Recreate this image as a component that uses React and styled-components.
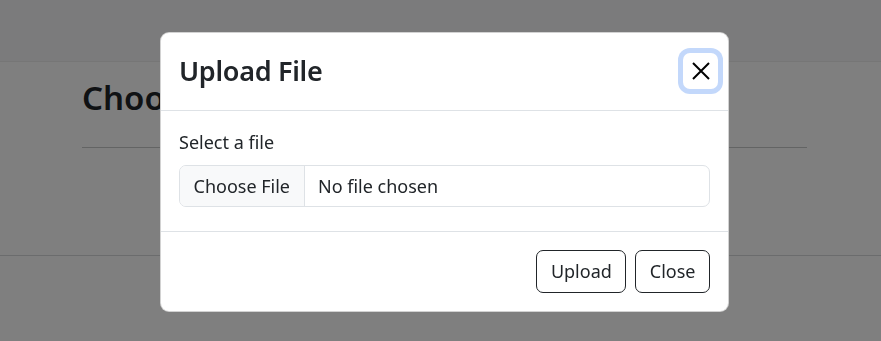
import styled, { createGlobalStyle } from 'styled-components';

const GlobalStyle = createGlobalStyle`
  * { box-sizing: border-box; }
  html, body { margin: 0; padding: 0; }
  body {
    font-family: 'Noto Sans', 'Open Sans', sans-serif;
    font-size: 18px;
    line-height: 1.5;
    color: #212529;
    background: #ffffff;
  }
`;

export default function App() {
  return (
    <>
      <GlobalStyle />
      <Page>
        <Navbar />
        <Section>
          <Heading>Choose a file to upload</Heading>
          <Rule />
        </Section>
      </Page>

      <Backdrop>
        <Dialog>
          <Header>
            <Title>Upload File</Title>
            <CloseButton aria-label="Close">
              <svg width="18" height="18" viewBox="0 0 18 18">
                <path d="M1 1 L17 17 M17 1 L1 17" stroke="#000" strokeWidth="2" fill="none" />
              </svg>
            </CloseButton>
          </Header>
          <Body>
            <Label>Select a file</Label>
            <FileField>
              <FileButton>Choose File</FileButton>
              <FileName>No file chosen</FileName>
            </FileField>
          </Body>
          <Footer>
            <OutlineButton>Upload</OutlineButton>
            <OutlineButton>Close</OutlineButton>
          </Footer>
        </Dialog>
      </Backdrop>
    </>
  );
}

const Page = styled.div`
  min-height: 341px;
`;

const Navbar = styled.nav`
  height: 62px;
  background: #f7f7f8;
  border-bottom: 1px solid #ececec;
`;

const Section = styled.section`
  height: 194px;
  padding: 16px 74px 0 82px;
  border-bottom: 1px solid #d6d8db;
`;

const Heading = styled.h2`
  margin: 0;
  font-size: 33px;
  font-weight: 600;
  line-height: 1.2;
  white-space: nowrap;
`;

const Rule = styled.hr`
  margin: 29px 0 0;
  border: 0;
  border-top: 1px solid #212529;
  opacity: 0.25;
`;

const Backdrop = styled.div`
  position: fixed;
  inset: 0;
  background: rgba(0, 0, 0, 0.5);
  display: flex;
  justify-content: center;
  align-items: flex-start;
  padding: 32px 0 0 8px;
`;

const Dialog = styled.div`
  width: 569px;
  background: #ffffff;
  border: 1px solid rgba(0, 0, 0, 0.175);
  border-radius: 9px;
  display: flex;
  flex-direction: column;
`;

const Header = styled.div`
  display: flex;
  align-items: center;
  justify-content: space-between;
  height: 78px;
  padding: 0 10px 0 18px;
  border-bottom: 1px solid #dee2e6;
`;

const Title = styled.h5`
  margin: 0;
  font-size: 27px;
  font-weight: 600;
  letter-spacing: -0.3px;
  line-height: 1.5;
`;

const CloseButton = styled.button`
  width: 35px;
  height: 36px;
  padding: 0;
  display: flex;
  align-items: center;
  justify-content: center;
  background: transparent;
  border: 0;
  border-radius: 7px;
  box-shadow: 0 0 0 5px #c3d8fb;
  margin-bottom: 2px;
`;

const Body = styled.div`
  padding: 18px 18px 24px;
`;

const Label = styled.label`
  display: block;
  margin-bottom: 9px;
  font-size: 18px;
  line-height: 27px;
`;

const FileField = styled.div`
  display: flex;
  align-items: stretch;
  height: 42px;
  border: 1px solid #dee2e6;
  border-radius: 7px;
  overflow: hidden;
`;

const FileButton = styled.span`
  display: flex;
  align-items: center;
  padding: 0 13.5px;
  background: #f8f9fa;
  border-right: 1px solid #dee2e6;
  white-space: nowrap;
`;

const FileName = styled.span`
  display: flex;
  align-items: center;
  padding: 0 13.5px;
  white-space: nowrap;
`;

const Footer = styled.div`
  display: flex;
  justify-content: flex-end;
  gap: 9px;
  padding: 18px 18px 18px;
  border-top: 1px solid #dee2e6;
`;

const OutlineButton = styled.button`
  font-family: inherit;
  font-size: 18px;
  line-height: 27px;
  color: #212529;
  background: #ffffff;
  border: 1px solid #212529;
  border-radius: 7px;
  padding: 6.75px 13.5px;
`;
